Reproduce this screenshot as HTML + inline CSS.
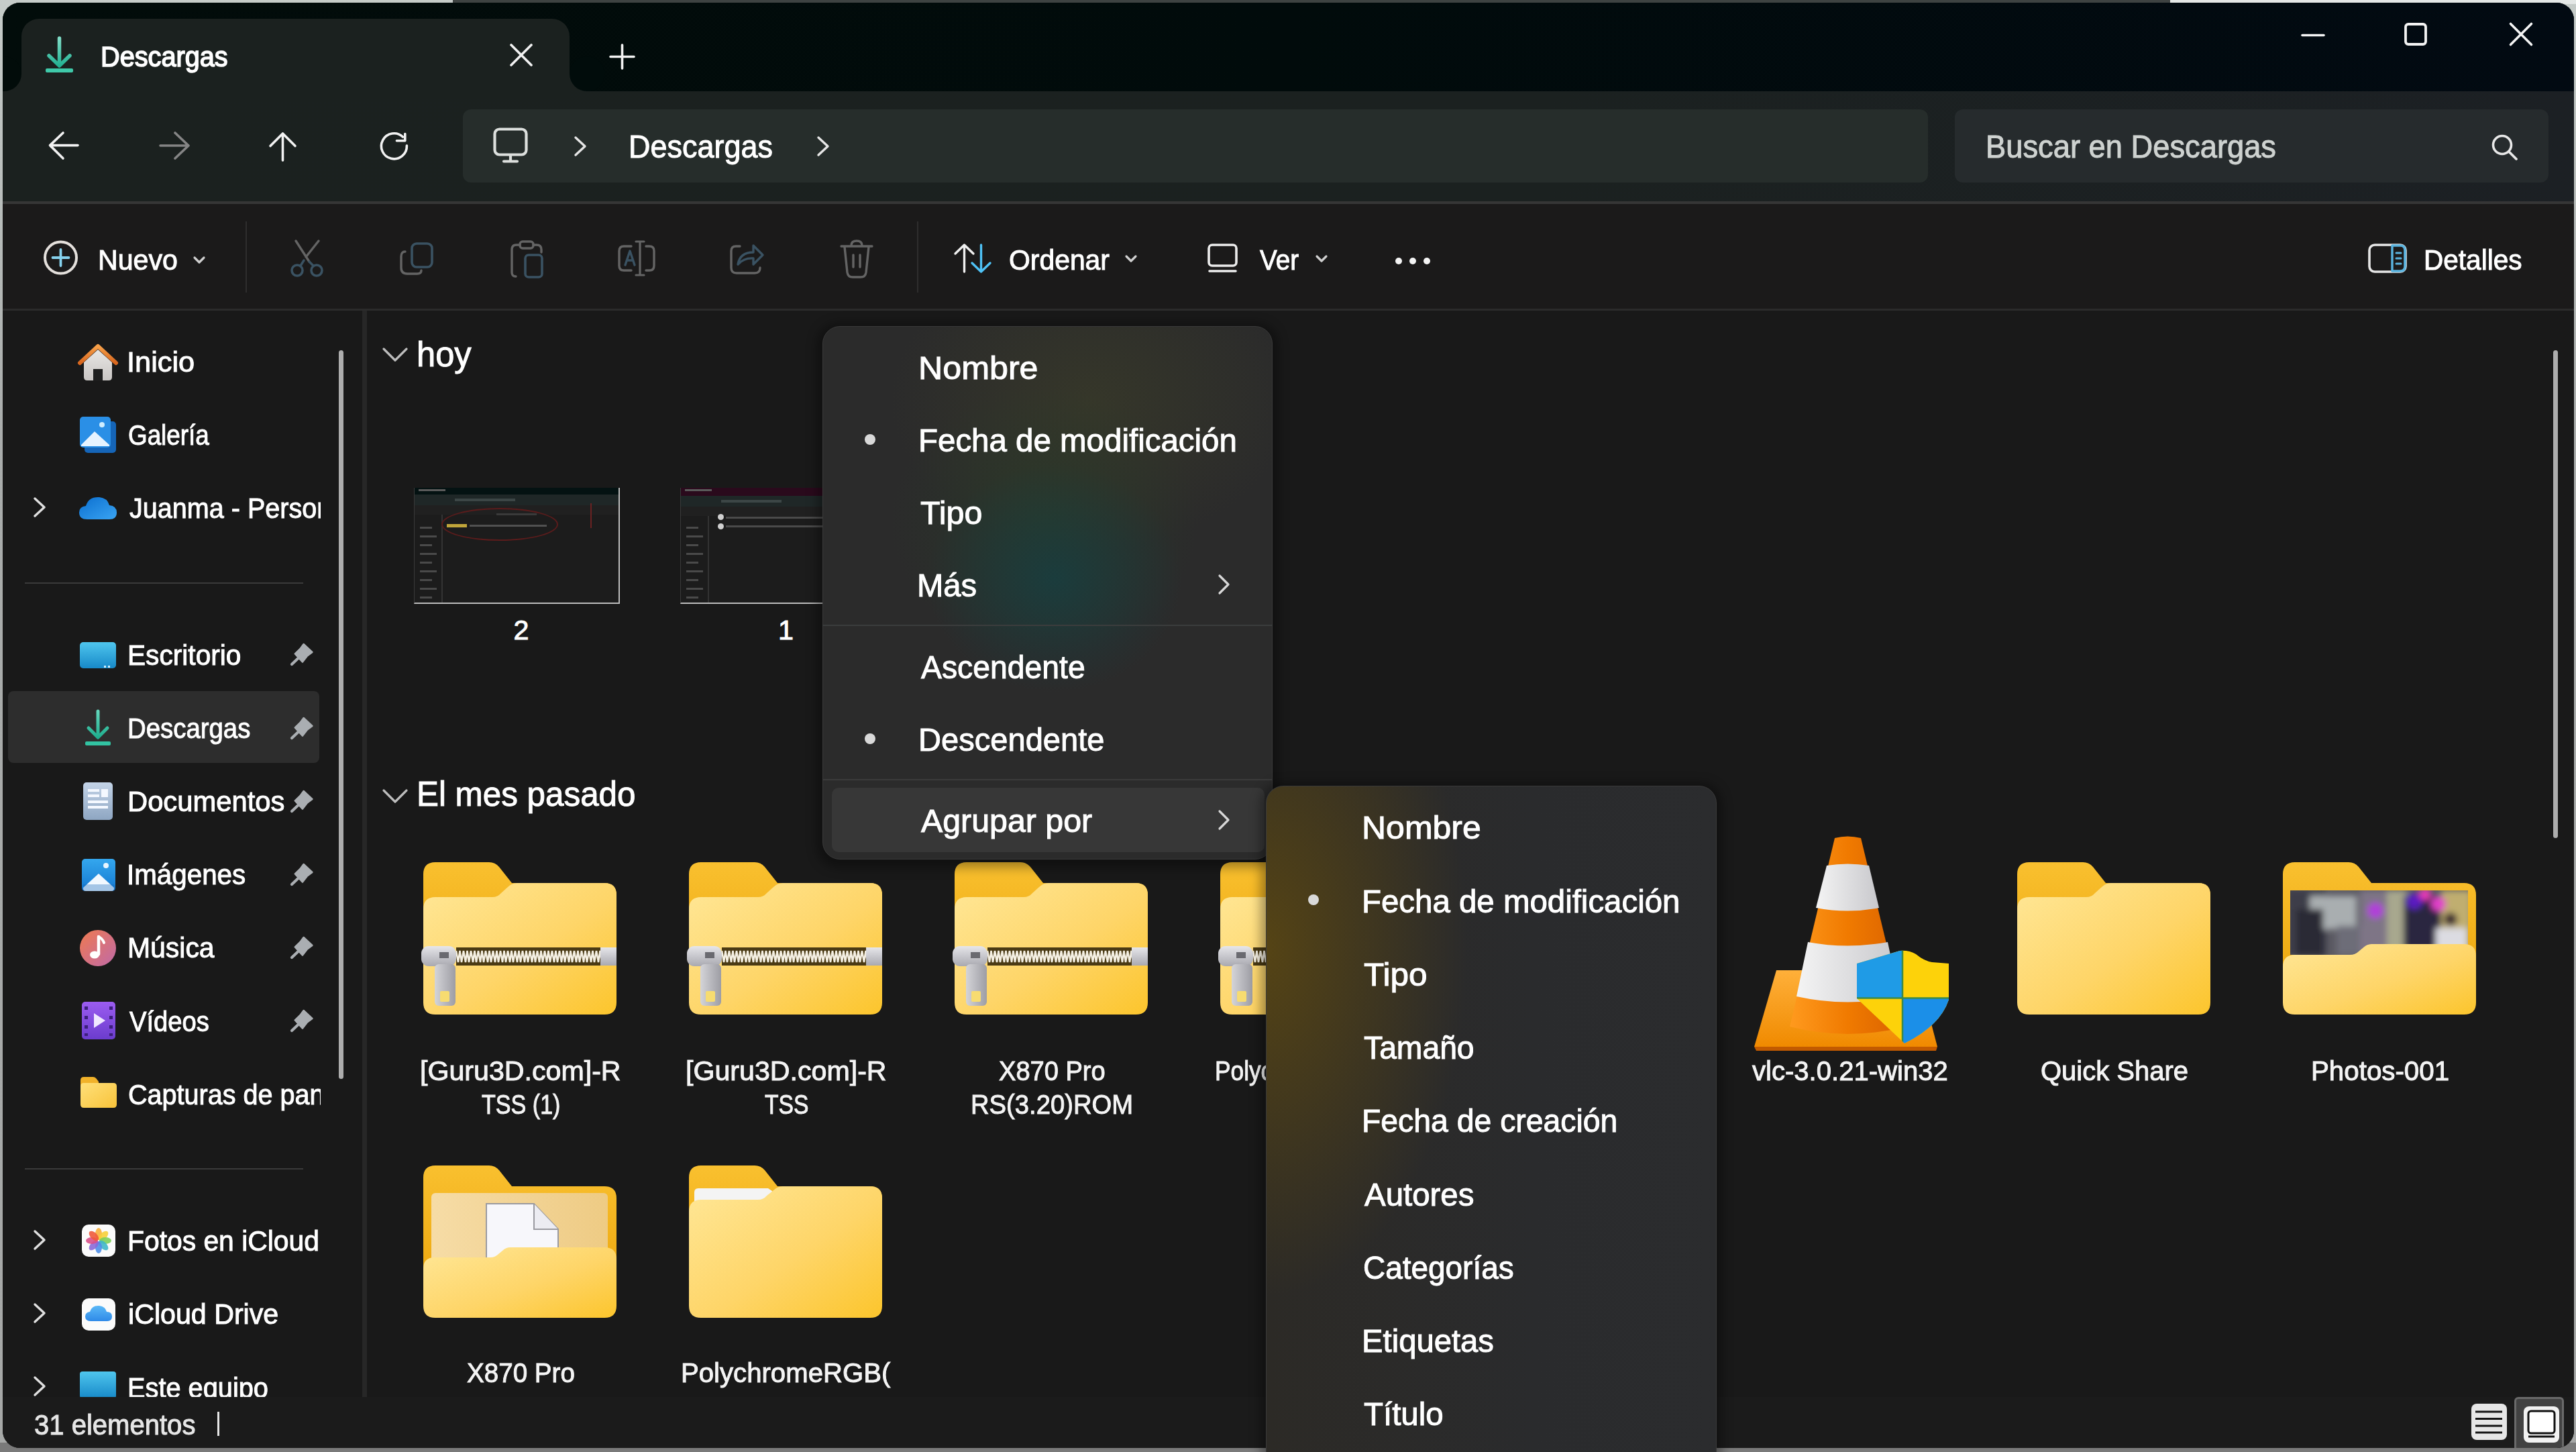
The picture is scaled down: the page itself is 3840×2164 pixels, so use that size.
<!DOCTYPE html>
<html><head><meta charset="utf-8">
<style>
*{margin:0;padding:0;box-sizing:border-box}
html,body{width:3840px;height:2164px;overflow:hidden;background:#c9d0cd;font-family:"Liberation Sans",sans-serif;color:#fff}
.a{position:absolute}
#win{position:absolute;left:0;top:0;width:3840px;height:2164px;clip-path:inset(4px 3px 6px 4px round 26px);background:#191919}
.t{position:absolute;white-space:nowrap;line-height:1;-webkit-text-stroke:1px currentColor}
svg.i{position:absolute;overflow:visible}
</style></head><body>
<div class="a" style="left:0;top:0;width:3840px;height:2164px;background:linear-gradient(180deg,#c6ccc9 0,#aaadac 30%,#a6a8a7 100%)"></div>
<div class="a" style="left:675px;top:0;width:2560px;height:6px;background:#3e4342"></div>
<div class="a" style="left:3235px;top:0;width:605px;height:6px;background:#e4e7e6"></div>
<div class="a" style="left:0;top:2150px;width:3840px;height:14px;background:#7a7a7a"></div>
<div id="win">
<div class="a" style="left:0px;top:0px;width:3840px;height:301px;background:linear-gradient(90deg,#1b211f,#1b2120 60%,#1c2024);"></div><div class="a" style="left:0px;top:0px;width:3840px;height:136px;background:linear-gradient(90deg,#020c0a,#010b0b 50%,#020a12);"></div><div class="a" style="left:6px;top:110px;width:26px;height:26px;background:#1b211f;"></div><div class="a" style="left:849px;top:110px;width:26px;height:26px;background:#1b211f;"></div><div class="a" style="left:-20px;top:84px;width:52px;height:52px;background:#020c0a;border-radius:50%"></div><div class="a" style="left:849px;top:84px;width:52px;height:52px;background:#010c0b;border-radius:50%"></div><div class="a" style="left:32px;top:28px;width:817px;height:120px;background:#1b211f;border-radius:26px 26px 0 0"></div><svg class="i" style="left:60px;top:50px;" width="56" height="64" viewBox="0 0 56 64"><defs><linearGradient id="dlg" x1="0" y1="0" x2="0" y2="1"><stop offset="0" stop-color="#7fdcc6"/><stop offset="1" stop-color="#23b192"/></linearGradient></defs>
<path d="M28.5,7 V47 M13,33 L28.5,48 L44,33" fill="none" stroke="url(#dlg)" stroke-width="5.5" stroke-linecap="round" stroke-linejoin="round"/>
<rect x="8" y="52" width="41" height="6" rx="2" fill="#3fc9a9"/></svg><div class="t" style="left:149.5px;top:62.5px;font-size:43px;color:#fff;font-weight:normal;transform:scaleX(0.9228);transform-origin:0 0;-webkit-text-stroke:1.6px #fff">Descargas</div><svg class="i" style="left:760px;top:65px;" width="34" height="34" viewBox="0 0 34 34"><path d="M2,2 L32,32 M32,2 L2,32" stroke="#f2f2f2" stroke-width="3.6" stroke-linecap="round"/></svg><svg class="i" style="left:909px;top:66px;" width="37" height="37" viewBox="0 0 37 37"><path d="M18.5,1 V36 M1,18.5 H36" stroke="#f2f2f2" stroke-width="3.6" stroke-linecap="round"/></svg><svg class="i" style="left:3431px;top:50px;" width="34" height="6" viewBox="0 0 34 6"><path d="M1,2.5 H33" stroke="#f4f4f4" stroke-width="3.6" stroke-linecap="round"/></svg><svg class="i" style="left:3584px;top:34px;" width="34" height="34" viewBox="0 0 34 34"><rect x="2" y="2" width="30" height="30" rx="4" fill="none" stroke="#f4f4f4" stroke-width="3.8"/></svg><svg class="i" style="left:3741px;top:34px;" width="34" height="34" viewBox="0 0 34 34"><path d="M1.5,1.5 L32.5,32.5 M32.5,1.5 L1.5,32.5" stroke="#f4f4f4" stroke-width="3.6" stroke-linecap="round"/></svg><svg class="i" style="left:60px;top:180px;" width="80" height="80" viewBox="0 0 80 80"><path d="M14.5,36.6 H56 M34,18 L14.5,36.6 L34,56" stroke="#f2f2f2" stroke-width="3.6" fill="none" stroke-linecap="round" stroke-linejoin="round"/></svg><svg class="i" style="left:220px;top:180px;" width="80" height="80" viewBox="0 0 80 80"><path d="M19,37 H61 M41,18 L61,37 L41,56" stroke="#858585" stroke-width="3.6" fill="none" stroke-linecap="round" stroke-linejoin="round"/></svg><svg class="i" style="left:380px;top:180px;" width="80" height="80" viewBox="0 0 80 80"><path d="M41.5,19 V59 M23,37.5 L41.5,19 L60,37.5" stroke="#f2f2f2" stroke-width="3.6" fill="none" stroke-linecap="round" stroke-linejoin="round"/></svg><svg class="i" style="left:540px;top:180px;" width="80" height="80" viewBox="0 0 80 80"><path d="M66.4,37 A19,19 0 1 1 60.5,24" stroke="#f2f2f2" stroke-width="3.6" fill="none" stroke-linecap="round" stroke-linejoin="round"/><path d="M63.8,19.5 V29.8 H51.4" stroke="#f2f2f2" stroke-width="3.6" fill="none" stroke-linecap="round" stroke-linejoin="round"/></svg><div class="a" style="left:690px;top:163px;width:2184px;height:109px;background:#262d2b;border-radius:12px"></div><div class="a" style="left:2914px;top:163px;width:885px;height:109px;background:#262b2d;border-radius:12px"></div><svg class="i" style="left:730px;top:185px;" width="64" height="64" viewBox="0 0 64 64"><rect x="7.5" y="7.5" width="47" height="38" rx="7" stroke="#dcdfdd" stroke-width="4.2" fill="none" stroke-linecap="round" stroke-linejoin="round"/><path d="M31,46 V54 M21,55.5 H41" stroke="#dcdfdd" stroke-width="4.2" fill="none" stroke-linecap="round" stroke-linejoin="round"/></svg><svg class="i" style="left:850px;top:200px;" width="30" height="36" viewBox="0 0 30 36"><path d="M8,5 L22,18 L8,31" stroke="#e6e6e6" stroke-width="3.4" fill="none" stroke-linecap="round" stroke-linejoin="round"/></svg><div class="t" style="left:937.4px;top:194.6px;font-size:48px;color:#fff;font-weight:normal;transform:scaleX(0.9369);transform-origin:0 0;">Descargas</div><svg class="i" style="left:1212px;top:200px;" width="30" height="36" viewBox="0 0 30 36"><path d="M8,5 L22,18 L8,31" stroke="#e6e6e6" stroke-width="3.4" fill="none" stroke-linecap="round" stroke-linejoin="round"/></svg><div class="t" style="left:2960.4px;top:195.2px;font-size:48px;color:#ced2d0;font-weight:normal;transform:scaleX(0.9436);transform-origin:0 0;">Buscar en Descargas</div><svg class="i" style="left:3710px;top:196px;" width="50" height="50" viewBox="0 0 50 50"><circle cx="20" cy="20" r="13.5" stroke="#e8e8e8" stroke-width="3.6" fill="none" stroke-linecap="round" stroke-linejoin="round"/><path d="M30,30 L41,41" stroke="#e8e8e8" stroke-width="3.8" fill="none" stroke-linecap="round" stroke-linejoin="round"/></svg><div class="a" style="left:0px;top:300px;width:3840px;height:4px;background:#363636;"></div><div class="a" style="left:0px;top:304px;width:3840px;height:156px;background:#1b1a1a;"></div><div class="a" style="left:0px;top:460px;width:3840px;height:3px;background:#2b2b2b;"></div><svg class="i" style="left:60px;top:354px;" width="62" height="62" viewBox="0 0 62 62"><circle cx="30.5" cy="30" r="23.5" stroke="#e4e0dc" stroke-width="4" fill="none" stroke-linecap="round" stroke-linejoin="round"/><path d="M30.5,18 V42 M18.5,30 H42.5" stroke="#86d2ee" stroke-width="3.8" fill="none" stroke-linecap="round" stroke-linejoin="round"/></svg><div class="t" style="left:146.2px;top:367.4px;font-size:42.5px;color:#fff;font-weight:normal;transform:scaleX(0.9676);transform-origin:0 0;">Nuevo</div><svg class="i" style="left:287px;top:381px;" width="20" height="14" viewBox="0 0 20 14"><path d="M3,3 L10,10 L17,3" stroke="#d0d0d0" stroke-width="3.2" fill="none" stroke-linecap="round" stroke-linejoin="round"/></svg><div class="a" style="left:366px;top:330px;width:2px;height:106px;background:#2e2e2e;"></div><svg class="i" style="left:425px;top:350px;" width="70" height="70" viewBox="0 0 70 70"><path d="M16,9 L36,40 M50,9 L31,33" stroke="#646464" stroke-width="3.4" fill="none" stroke-linecap="round" stroke-linejoin="round"/><circle cx="18" cy="53" r="8" stroke="#3a5262" stroke-width="3.6" fill="none" stroke-linecap="round" stroke-linejoin="round"/><circle cx="47" cy="53" r="8" stroke="#3a5262" stroke-width="3.6" fill="none" stroke-linecap="round" stroke-linejoin="round"/><path d="M36,40 L42,46 M28,38 L23,46" stroke="#3a5262" stroke-width="3.4" fill="none" stroke-linecap="round" stroke-linejoin="round"/></svg><svg class="i" style="left:590px;top:355px;" width="65" height="60" viewBox="0 0 65 60"><path d="M14,20 Q8,20 8,27 V44 Q8,53 17,53 H32 Q38,53 38,48" stroke="#646464" stroke-width="3.4" fill="none" stroke-linecap="round" stroke-linejoin="round"/><rect x="24" y="8" width="30" height="35" rx="7" stroke="#3a5262" stroke-width="3.6" fill="none" stroke-linecap="round" stroke-linejoin="round"/></svg><svg class="i" style="left:755px;top:350px;" width="65" height="70" viewBox="0 0 65 70"><path d="M14,62 Q8,62 8,56 V22 Q8,15 15,15 H20 M40,15 H45 Q52,15 52,22 V26" stroke="#646464" stroke-width="3.4" fill="none" stroke-linecap="round" stroke-linejoin="round"/><rect x="20" y="10" width="20" height="10" rx="4" stroke="#646464" stroke-width="3.4" fill="none" stroke-linecap="round" stroke-linejoin="round"/><rect x="28" y="30" width="25" height="33" rx="5" stroke="#3a5262" stroke-width="3.6" fill="none" stroke-linecap="round" stroke-linejoin="round"/></svg><svg class="i" style="left:915px;top:350px;" width="70" height="70" viewBox="0 0 70 70"><path d="M26,17 H15 Q8,17 8,24 V46 Q8,53 15,53 H26 M48,17 H53 Q60,17 60,24 V46 Q60,53 53,53 H48" stroke="#646464" stroke-width="3.4" fill="none" stroke-linecap="round" stroke-linejoin="round"/><path d="M39,10 V60 M33,10 H45 M33,60 H45" stroke="#646464" stroke-width="3.2" fill="none" stroke-linecap="round" stroke-linejoin="round"/><path d="M17,45 L24,24 L31,45 M20,38 H28" stroke="#3a5262" stroke-width="3.4" fill="none" stroke-linecap="round" stroke-linejoin="round"/></svg><svg class="i" style="left:1083px;top:352px;" width="60" height="62" viewBox="0 0 60 62"><path d="M20,15 H14 Q7,15 7,22 V47 Q7,55 15,55 H42 Q50,55 50,47" stroke="#646464" stroke-width="3.4" fill="none" stroke-linecap="round" stroke-linejoin="round"/><path d="M17,42 Q20,24 40,24 V14 L54,28 L40,42 V33 Q26,32 17,42 Z" stroke="#3a5262" stroke-width="3.4" fill="none" stroke-linecap="round" stroke-linejoin="round"/></svg><svg class="i" style="left:1247px;top:350px;" width="60" height="70" viewBox="0 0 60 70"><path d="M7,17 H53 M22,16 Q22,9 30,9 Q38,9 38,16 M12,18 L16,56 Q17,63 24,63 H36 Q43,63 44,56 L48,18 M25,30 V48 M35,30 V48" stroke="#646464" stroke-width="3.4" fill="none" stroke-linecap="round" stroke-linejoin="round"/></svg><div class="a" style="left:1367px;top:330px;width:2px;height:106px;background:#2e2e2e;"></div><svg class="i" style="left:1418px;top:358px;" width="66" height="54" viewBox="0 0 66 54"><path d="M19.5,7 V47 M6,20 L19.5,7 L33,20" stroke="#f0f0f0" stroke-width="3.4" fill="none" stroke-linecap="round" stroke-linejoin="round"/><path d="M44.5,7 V47 M31,34 L44.5,47 L58,34" stroke="#4fc3f7" stroke-width="3.4" fill="none" stroke-linecap="round" stroke-linejoin="round"/></svg><div class="t" style="left:1504.4px;top:367.4px;font-size:42.5px;color:#fff;font-weight:normal;transform:scaleX(0.9619);transform-origin:0 0;">Ordenar</div><svg class="i" style="left:1676px;top:379px;" width="20" height="14" viewBox="0 0 20 14"><path d="M3,3 L10,10 L17,3" stroke="#d0d0d0" stroke-width="3.2" fill="none" stroke-linecap="round" stroke-linejoin="round"/></svg><svg class="i" style="left:1795px;top:358px;" width="56" height="52" viewBox="0 0 56 52"><rect x="7" y="7" width="41" height="31" rx="5" stroke="#ececec" stroke-width="3.6" fill="none" stroke-linecap="round" stroke-linejoin="round"/><path d="M8,46 H47" stroke="#ececec" stroke-width="3.6" fill="none" stroke-linecap="round" stroke-linejoin="round"/></svg><div class="t" style="left:1878.0px;top:367.4px;font-size:42.5px;color:#fff;font-weight:normal;transform:scaleX(0.9093);transform-origin:0 0;">Ver</div><svg class="i" style="left:1960px;top:379px;" width="20" height="14" viewBox="0 0 20 14"><path d="M3,3 L10,10 L17,3" stroke="#d0d0d0" stroke-width="3.2" fill="none" stroke-linecap="round" stroke-linejoin="round"/></svg><div class="a" style="left:2080px;top:384px;width:10px;height:10px;background:#f4f4f4;border-radius:50%"></div><div class="a" style="left:2101px;top:384px;width:10px;height:10px;background:#f4f4f4;border-radius:50%"></div><div class="a" style="left:2122px;top:384px;width:10px;height:10px;background:#f4f4f4;border-radius:50%"></div><svg class="i" style="left:3526px;top:358px;" width="66" height="54" viewBox="0 0 66 54"><rect x="6" y="7" width="54" height="40" rx="8" stroke="#e6e6e6" stroke-width="3.6" fill="none" stroke-linecap="round" stroke-linejoin="round"/><path d="M40,8 V46" stroke="#5ab4e0" stroke-width="3.4"/><path d="M46,19 H53 M46,27 H53 M46,35 H53" stroke="#5ab4e0" stroke-width="3" fill="none" stroke-linecap="round" stroke-linejoin="round"/><path d="M40,8 H52 Q59,8 59,15 V39 Q59,46 52,46 H40" stroke="#5ab4e0" stroke-width="3.6" fill="none" stroke-linecap="round" stroke-linejoin="round"/></svg><div class="t" style="left:3612.8px;top:367.4px;font-size:42.5px;color:#fff;font-weight:normal;transform:scaleX(0.9539);transform-origin:0 0;">Detalles</div><div class="a" style="left:0px;top:463px;width:542px;height:1619px;background:#191919;"></div><div class="a" style="left:540px;top:463px;width:7px;height:1619px;background:#272727;"></div><div class="a" style="left:0px;top:463px;width:3840px;height:1619px;background:transparent;"></div><div class="a" style="left:12px;top:1030px;width:464px;height:107px;background:#2d2d2d;border-radius:8px"></div><div class="a" style="left:37px;top:868px;width:415px;height:2px;background:#3a3a3a;"></div><div class="a" style="left:37px;top:1741px;width:415px;height:2px;background:#3a3a3a;"></div><div class="a" style="left:505px;top:522px;width:7px;height:1086px;background:#adadad;border-radius:3.5px"></div><div class="a" style="left:0;top:0;width:478px;height:2082px;overflow:hidden"><div class="t" style="left:189.1px;top:517.7px;font-size:43px;color:#fff;font-weight:normal;transform:scaleX(1.0078);transform-origin:0 0;">Inicio</div><div class="t" style="left:191.2px;top:626.9px;font-size:43px;color:#fff;font-weight:normal;transform:scaleX(0.8560);transform-origin:0 0;">Galería</div><div class="t" style="left:192.6px;top:736.1px;font-size:43px;color:#fff;font-weight:normal;transform:scaleX(0.9200);transform-origin:0 0;">Juanma - Personal</div><div class="t" style="left:189.7px;top:954.5px;font-size:43px;color:#fff;font-weight:normal;transform:scaleX(0.9454);transform-origin:0 0;">Escritorio</div><div class="t" style="left:189.9px;top:1063.7px;font-size:43px;color:#fff;font-weight:normal;transform:scaleX(0.8919);transform-origin:0 0;">Descargas</div><div class="t" style="left:189.7px;top:1172.9px;font-size:43px;color:#fff;font-weight:normal;transform:scaleX(0.9710);transform-origin:0 0;">Documentos</div><div class="t" style="left:189.4px;top:1282.1px;font-size:43px;color:#fff;font-weight:normal;transform:scaleX(0.9386);transform-origin:0 0;">Imágenes</div><div class="t" style="left:189.7px;top:1391.3px;font-size:43px;color:#fff;font-weight:normal;transform:scaleX(0.9516);transform-origin:0 0;">Música</div><div class="t" style="left:193.0px;top:1500.5px;font-size:43px;color:#fff;font-weight:normal;transform:scaleX(0.8878);transform-origin:0 0;">Vídeos</div><div class="t" style="left:191.0px;top:1609.7px;font-size:43px;color:#fff;font-weight:normal;transform:scaleX(0.9200);transform-origin:0 0;">Capturas de pantalla</div><div class="t" style="left:189.7px;top:1828.1px;font-size:43px;color:#fff;font-weight:normal;transform:scaleX(0.9492);transform-origin:0 0;">Fotos en iCloud</div><div class="t" style="left:190.5px;top:1937.3px;font-size:43px;color:#fff;font-weight:normal;transform:scaleX(0.9576);transform-origin:0 0;">iCloud Drive</div><div class="t" style="left:189.8px;top:2046.5px;font-size:43px;color:#fff;font-weight:normal;transform:scaleX(0.9243);transform-origin:0 0;">Este equipo</div></div><svg class="i" style="left:46px;top:740px;" width="28" height="32" viewBox="0 0 28 32"><path d="M6,3 L20,16 L6,29" stroke="#e0e0e0" stroke-width="3.4" fill="none" stroke-linecap="round" stroke-linejoin="round"/></svg><svg class="i" style="left:428px;top:952px;" width="44" height="44" viewBox="0 0 44 44"><path d="M24.6,8 L37.4,20 L30,25.5 L23,34.6 L11.8,22.4 L19.5,15 Z" fill="#aaaeb2" stroke="#aaaeb2" stroke-width="2.5" stroke-linejoin="round"/><path d="M16.5,29 L7,38" stroke="#aaaeb2" stroke-width="4.2" stroke-linecap="round"/></svg><svg class="i" style="left:428px;top:1062px;" width="44" height="44" viewBox="0 0 44 44"><path d="M24.6,8 L37.4,20 L30,25.5 L23,34.6 L11.8,22.4 L19.5,15 Z" fill="#aaaeb2" stroke="#aaaeb2" stroke-width="2.5" stroke-linejoin="round"/><path d="M16.5,29 L7,38" stroke="#aaaeb2" stroke-width="4.2" stroke-linecap="round"/></svg><svg class="i" style="left:428px;top:1171px;" width="44" height="44" viewBox="0 0 44 44"><path d="M24.6,8 L37.4,20 L30,25.5 L23,34.6 L11.8,22.4 L19.5,15 Z" fill="#aaaeb2" stroke="#aaaeb2" stroke-width="2.5" stroke-linejoin="round"/><path d="M16.5,29 L7,38" stroke="#aaaeb2" stroke-width="4.2" stroke-linecap="round"/></svg><svg class="i" style="left:428px;top:1280px;" width="44" height="44" viewBox="0 0 44 44"><path d="M24.6,8 L37.4,20 L30,25.5 L23,34.6 L11.8,22.4 L19.5,15 Z" fill="#aaaeb2" stroke="#aaaeb2" stroke-width="2.5" stroke-linejoin="round"/><path d="M16.5,29 L7,38" stroke="#aaaeb2" stroke-width="4.2" stroke-linecap="round"/></svg><svg class="i" style="left:428px;top:1389px;" width="44" height="44" viewBox="0 0 44 44"><path d="M24.6,8 L37.4,20 L30,25.5 L23,34.6 L11.8,22.4 L19.5,15 Z" fill="#aaaeb2" stroke="#aaaeb2" stroke-width="2.5" stroke-linejoin="round"/><path d="M16.5,29 L7,38" stroke="#aaaeb2" stroke-width="4.2" stroke-linecap="round"/></svg><svg class="i" style="left:428px;top:1498px;" width="44" height="44" viewBox="0 0 44 44"><path d="M24.6,8 L37.4,20 L30,25.5 L23,34.6 L11.8,22.4 L19.5,15 Z" fill="#aaaeb2" stroke="#aaaeb2" stroke-width="2.5" stroke-linejoin="round"/><path d="M16.5,29 L7,38" stroke="#aaaeb2" stroke-width="4.2" stroke-linecap="round"/></svg><svg class="i" style="left:46px;top:1832px;" width="28" height="32" viewBox="0 0 28 32"><path d="M6,3 L20,16 L6,29" stroke="#e0e0e0" stroke-width="3.4" fill="none" stroke-linecap="round" stroke-linejoin="round"/></svg><svg class="i" style="left:46px;top:1941px;" width="28" height="32" viewBox="0 0 28 32"><path d="M6,3 L20,16 L6,29" stroke="#e0e0e0" stroke-width="3.4" fill="none" stroke-linecap="round" stroke-linejoin="round"/></svg><svg class="i" style="left:46px;top:2050px;" width="28" height="32" viewBox="0 0 28 32"><path d="M6,3 L20,16 L6,29" stroke="#e0e0e0" stroke-width="3.4" fill="none" stroke-linecap="round" stroke-linejoin="round"/></svg><svg class="i" style="left:116px;top:512px;" width="60" height="58" viewBox="0 0 60 58"><defs><linearGradient id="hr" x1="0" y1="0" x2="0" y2="1"><stop offset="0" stop-color="#f7a14a"/><stop offset="1" stop-color="#d8661e"/></linearGradient>
<linearGradient id="hb" x1="0" y1="0" x2="0" y2="1"><stop offset="0" stop-color="#e8e6e4"/><stop offset="1" stop-color="#c9c6c4"/></linearGradient></defs>
<path d="M9,28 L30,9 L51,28 V50 Q51,55 46,55 H37 V38 H23 V55 H14 Q9,55 9,50 Z" fill="url(#hb)"/>
<path d="M3,29 L30,4 L57,29" fill="none" stroke="url(#hr)" stroke-width="6" stroke-linecap="round" stroke-linejoin="round"/>
<rect x="24" y="38" width="12" height="17" fill="#1f1f1f"/></svg><svg class="i" style="left:117px;top:619px;" width="58" height="58" viewBox="0 0 58 58"><rect x="9" y="9" width="47" height="47" rx="5" fill="#1565b8"/>
<rect x="2" y="2" width="46" height="46" rx="5" fill="#2a8fe6"/>
<circle cx="35" cy="14" r="4" fill="#cfeeff"/>
<path d="M4,44 L24,24 L46,44 V46 H4 Z" fill="#e6f3ff"/></svg><svg class="i" style="left:116px;top:736px;" width="60" height="42" viewBox="0 0 60 42"><defs><linearGradient id="od" x1="0" y1="0" x2="1" y2="1"><stop offset="0" stop-color="#0b6fd0"/><stop offset="1" stop-color="#3aa4f2"/></linearGradient></defs>
<path d="M14,38 Q2,38 2,28 Q2,19 12,18 Q16,4 32,5 Q44,6 47,17 Q58,18 58,28 Q58,38 47,38 Z" fill="url(#od)"/></svg><svg class="i" style="left:117px;top:955px;" width="58" height="44" viewBox="0 0 58 44"><defs><linearGradient id="es" x1="0" y1="0" x2="0" y2="1"><stop offset="0" stop-color="#4fc6ee"/><stop offset="1" stop-color="#1789c8"/></linearGradient></defs>
<rect x="2" y="2" width="54" height="39" rx="5" fill="url(#es)"/><rect x="38" y="37" width="3" height="3" fill="#cfefff"/><rect x="44" y="37" width="3" height="3" fill="#cfefff"/></svg><svg class="i" style="left:122px;top:1054px;" width="50" height="62" viewBox="0 0 50 62"><defs><linearGradient id="dl2" x1="0" y1="0" x2="0" y2="1"><stop offset="0" stop-color="#62d6bb"/><stop offset="1" stop-color="#1fae8e"/></linearGradient></defs>
<path d="M24,6 V44 M10,31 L24,45 L38,31" fill="none" stroke="url(#dl2)" stroke-width="5" stroke-linecap="round" stroke-linejoin="round"/>
<rect x="5" y="51" width="38" height="6" rx="2" fill="#32c3a2"/></svg><svg class="i" style="left:122px;top:1164px;" width="48" height="60" viewBox="0 0 48 60"><defs><linearGradient id="dc" x1="0" y1="0" x2="0" y2="1"><stop offset="0" stop-color="#c4d4e8"/><stop offset="1" stop-color="#8ea6c2"/></linearGradient></defs>
<rect x="2" y="2" width="44" height="56" rx="5" fill="url(#dc)"/>
<rect x="9" y="12" width="17" height="4" fill="#f4f8ff"/><rect x="9" y="20" width="17" height="4" fill="#f4f8ff"/><rect x="29" y="12" width="10" height="12" fill="#f4f8ff"/>
<rect x="9" y="29" width="30" height="4" fill="#f4f8ff"/><rect x="9" y="37" width="30" height="4" fill="#f4f8ff"/></svg><svg class="i" style="left:120px;top:1278px;" width="54" height="52" viewBox="0 0 54 52"><defs><linearGradient id="im" x1="0" y1="0" x2="0" y2="1"><stop offset="0" stop-color="#34a7ee"/><stop offset="1" stop-color="#1478d0"/></linearGradient></defs>
<rect x="2" y="2" width="50" height="48" rx="5" fill="url(#im)"/><circle cx="38" cy="12" r="4" fill="#e8f6ff"/>
<path d="M4,45 L27,24 L50,45 V46 Q50,50 46,50 H8 Q4,50 4,46 Z" fill="#f1f8ff"/><rect x="2" y="40" width="50" height="10" rx="4" fill="#1466b8" opacity="0.35"/></svg><svg class="i" style="left:117px;top:1384px;" width="58" height="58" viewBox="0 0 58 58"><defs><linearGradient id="mu" x1="0" y1="0" x2="1" y2="1"><stop offset="0" stop-color="#ef7a50"/><stop offset="1" stop-color="#c06aa8"/></linearGradient></defs>
<circle cx="29" cy="29" r="27" fill="url(#mu)"/><path d="M30,12 V38" stroke="#fff" stroke-width="4.5" stroke-linecap="round"/><ellipse cx="24" cy="39" rx="7" ry="5.5" fill="#fff"/><path d="M30,12 Q36,15 38,21" stroke="#fff" stroke-width="4" fill="none" stroke-linecap="round"/></svg><svg class="i" style="left:120px;top:1491px;" width="54" height="60" viewBox="0 0 54 60"><defs><linearGradient id="vi" x1="0" y1="0" x2="0" y2="1"><stop offset="0" stop-color="#9b5cf0"/><stop offset="1" stop-color="#6b3ccd"/></linearGradient></defs>
<rect x="2" y="2" width="50" height="56" rx="5" fill="url(#vi)"/>
<g fill="#3b1f7a"><rect x="6" y="9" width="5" height="5"/><rect x="6" y="23" width="5" height="5"/><rect x="6" y="37" width="5" height="5"/><rect x="6" y="49" width="5" height="4"/><rect x="43" y="9" width="5" height="5"/><rect x="43" y="23" width="5" height="5"/><rect x="43" y="37" width="5" height="5"/><rect x="43" y="49" width="5" height="4"/></g>
<path d="M20,19 L37,30 L20,41 Z" fill="#f0e8ff"/></svg><svg class="i" style="left:118px;top:1603px;" width="58" height="50" viewBox="0 0 58 50"><defs><linearGradient id="cf" x1="0" y1="0" x2="1" y2="1"><stop offset="0" stop-color="#ffe07a"/><stop offset="1" stop-color="#f8c33a"/></linearGradient></defs>
<path d="M2,7 Q2,2 7,2 H21 Q24,2 26,5 L29,9 V30 H2 Z" fill="#f1b22a"/><path d="M2,16 Q2,11 7,11 H51 Q56,11 56,16 V43 Q56,48 51,48 H7 Q2,48 2,43 Z" fill="url(#cf)"/></svg><svg class="i" style="left:120px;top:1823px;" width="54" height="52" viewBox="0 0 54 52"><rect x="2" y="2" width="50" height="48" rx="10" fill="#fbfbfb"/>
<g transform="translate(27,26)">
<ellipse cx="0" cy="-10" rx="5" ry="9" fill="#f8b03c" opacity="0.9"/>
<ellipse cx="0" cy="-10" rx="5" ry="9" fill="#f6cf3a" transform="rotate(45)" opacity="0.9"/>
<ellipse cx="0" cy="-10" rx="5" ry="9" fill="#7ccf5a" transform="rotate(90)" opacity="0.9"/>
<ellipse cx="0" cy="-10" rx="5" ry="9" fill="#3fb7c9" transform="rotate(135)" opacity="0.9"/>
<ellipse cx="0" cy="-10" rx="5" ry="9" fill="#4f8ee8" transform="rotate(180)" opacity="0.9"/>
<ellipse cx="0" cy="-10" rx="5" ry="9" fill="#8a6ad8" transform="rotate(225)" opacity="0.9"/>
<ellipse cx="0" cy="-10" rx="5" ry="9" fill="#d9508a" transform="rotate(270)" opacity="0.9"/>
<ellipse cx="0" cy="-10" rx="5" ry="9" fill="#ef5a3a" transform="rotate(315)" opacity="0.9"/>
</g></svg><svg class="i" style="left:120px;top:1933px;" width="54" height="52" viewBox="0 0 54 52"><defs><linearGradient id="ic" x1="0" y1="0" x2="0" y2="1"><stop offset="0" stop-color="#5ab8f7"/><stop offset="1" stop-color="#2f8ae8"/></linearGradient></defs>
<rect x="2" y="2" width="50" height="48" rx="10" fill="#fbfbfb"/>
<path d="M15,36 Q7,36 7,29 Q7,23 14,22 Q17,12 28,13 Q37,14 39,22 Q47,22 47,29 Q47,36 40,36 Z" fill="url(#ic)"/></svg><svg class="i" style="left:117px;top:2042px;" width="58" height="44" viewBox="0 0 58 44"><defs><linearGradient id="eq" x1="0" y1="0" x2="0" y2="1"><stop offset="0" stop-color="#4fc6ee"/><stop offset="1" stop-color="#1789c8"/></linearGradient></defs>
<rect x="2" y="2" width="54" height="40" rx="4" fill="url(#eq)"/></svg><div class="a" style="left:0px;top:2082px;width:3840px;height:82px;background:#1b1b1b;"></div><div class="a" style="left:3806px;top:522px;width:7px;height:727px;background:#adadad;border-radius:3.5px"></div><svg class="i" style="left:566px;top:512px;" width="46" height="32" viewBox="0 0 46 32"><path d="M6,8 L23,25 L40,8" stroke="#bdbdbd" stroke-width="3.2" fill="none" stroke-linecap="round" stroke-linejoin="round"/></svg><div class="t" style="left:621.4px;top:502.6px;font-size:51px;color:#fff;font-weight:normal;transform:scaleX(0.9928);transform-origin:0 0;">hoy</div><svg class="i" style="left:566px;top:1170px;" width="46" height="32" viewBox="0 0 46 32"><path d="M6,8 L23,25 L40,8" stroke="#bdbdbd" stroke-width="3.2" fill="none" stroke-linecap="round" stroke-linejoin="round"/></svg><div class="t" style="left:621.3px;top:1156.8px;font-size:52px;color:#fff;font-weight:normal;transform:scaleX(0.9493);transform-origin:0 0;">El mes pasado</div><div class="a" style="left:617px;top:727px;width:307px;height:173px;background:#1c1c1c;border-right:2.5px solid #bdbdbd;border-bottom:2.5px solid #bdbdbd;border-left:1px solid #3a3a3a;overflow:hidden"><div class="a" style="left:0;top:0;width:307px;height:10px;background:#041212"></div><div class="a" style="left:0;top:10px;width:307px;height:16px;background:#1f2727"></div><div class="a" style="left:0;top:26px;width:307px;height:14px;background:#202020"></div><div class="a" style="left:6px;top:2px;width:40px;height:3px;background:#5a5a5a"></div><div class="a" style="left:60px;top:16px;width:90px;height:4px;background:#3c4646"></div><div class="a" style="left:8px;top:58px;width:18px;height:3px;background:#4a4a4a"></div><div class="a" style="left:8px;top:71px;width:25px;height:3px;background:#4a4a4a"></div><div class="a" style="left:8px;top:84px;width:18px;height:3px;background:#4a4a4a"></div><div class="a" style="left:8px;top:97px;width:25px;height:3px;background:#4a4a4a"></div><div class="a" style="left:8px;top:110px;width:18px;height:3px;background:#4a4a4a"></div><div class="a" style="left:8px;top:123px;width:25px;height:3px;background:#4a4a4a"></div><div class="a" style="left:8px;top:136px;width:18px;height:3px;background:#4a4a4a"></div><div class="a" style="left:8px;top:149px;width:25px;height:3px;background:#4a4a4a"></div><div class="a" style="left:8px;top:162px;width:18px;height:3px;background:#4a4a4a"></div><div class="a" style="left:40px;top:40px;width:1.5px;height:133px;background:#333"></div></div><div class="a" style="left:658px;top:757px;width:174px;height:49px;border:2.5px solid #5a1c1c;border-radius:50%"></div><div class="a" style="left:666px;top:781px;width:30px;height:5px;background:#c0a53a;"></div><div class="a" style="left:700px;top:782px;width:115px;height:3px;background:#505050;"></div><div class="a" style="left:880px;top:750px;width:2px;height:37px;background:#6a2222;"></div><div class="a" style="left:740px;top:765px;width:60px;height:3px;background:#3a3a3a;"></div><div class="a" style="left:1014px;top:727px;width:307px;height:173px;background:#1c1c1c;border-right:2.5px solid #bdbdbd;border-bottom:2.5px solid #bdbdbd;border-left:1px solid #3a3a3a;overflow:hidden"><div class="a" style="left:0;top:0;width:307px;height:12px;background:#2a0a1c"></div><div class="a" style="left:0;top:12px;width:307px;height:16px;background:#1f2727"></div><div class="a" style="left:0;top:28px;width:307px;height:14px;background:#202020"></div><div class="a" style="left:6px;top:2px;width:40px;height:3px;background:#5a5a5a"></div><div class="a" style="left:60px;top:18px;width:90px;height:4px;background:#3c4646"></div><div class="a" style="left:8px;top:58px;width:18px;height:3px;background:#4a4a4a"></div><div class="a" style="left:8px;top:71px;width:25px;height:3px;background:#4a4a4a"></div><div class="a" style="left:8px;top:84px;width:18px;height:3px;background:#4a4a4a"></div><div class="a" style="left:8px;top:97px;width:25px;height:3px;background:#4a4a4a"></div><div class="a" style="left:8px;top:110px;width:18px;height:3px;background:#4a4a4a"></div><div class="a" style="left:8px;top:123px;width:25px;height:3px;background:#4a4a4a"></div><div class="a" style="left:8px;top:136px;width:18px;height:3px;background:#4a4a4a"></div><div class="a" style="left:8px;top:149px;width:25px;height:3px;background:#4a4a4a"></div><div class="a" style="left:8px;top:162px;width:18px;height:3px;background:#4a4a4a"></div><div class="a" style="left:40px;top:42px;width:1.5px;height:131px;background:#333"></div></div><div class="a" style="left:1082px;top:770px;width:160px;height:3px;background:#4a4a4a;"></div><div class="a" style="left:1082px;top:783px;width:160px;height:3px;background:#4a4a4a;"></div><div class="a" style="left:1070px;top:766px;width:9px;height:9px;background:#d0d0d0;border-radius:50%"></div><div class="a" style="left:1070px;top:780px;width:9px;height:9px;background:#d0d0d0;border-radius:50%"></div><div class="t" style="left:765.4px;top:918.9px;font-size:41.3px;color:#fff;font-weight:normal;">2</div><div class="t" style="left:1160.0px;top:918.9px;font-size:41.3px;color:#fff;font-weight:normal;">1</div><svg width="0" height="0" style="position:absolute"><defs>
<linearGradient id="fT" x1="0" y1="0" x2="0" y2="1"><stop offset="0" stop-color="#f9c02f"/><stop offset="1" stop-color="#eda80f"/></linearGradient>
<linearGradient id="fF" x1="0" y1="0" x2="1" y2="1"><stop offset="0" stop-color="#ffe797"/><stop offset="0.55" stop-color="#fed568"/><stop offset="1" stop-color="#fcc52c"/></linearGradient>
<linearGradient id="fB" x1="0" y1="0" x2="1" y2="0"><stop offset="0" stop-color="#f6dca6"/><stop offset="1" stop-color="#eecb84"/></linearGradient>
<linearGradient id="zS" x1="0" y1="0" x2="0" y2="1"><stop offset="0" stop-color="#e6e6ea"/><stop offset="1" stop-color="#a9a9b0"/></linearGradient>
<linearGradient id="zP" x1="0" y1="0" x2="1" y2="0"><stop offset="0" stop-color="#d4d4d8"/><stop offset="1" stop-color="#9d9da4"/></linearGradient>
<pattern id="zT" x="49" y="127" width="11" height="27" patternUnits="userSpaceOnUse"><rect width="11" height="27" fill="#4a3a14"/><path d="M0,5 L3,22 L5.5,5 L8,22 L11,5" fill="none" stroke="#f4efe2" stroke-width="2.6" stroke-linejoin="miter"/></pattern>
</defs></svg><svg class="i" style="left:631px;top:1285px;" width="288" height="227" viewBox="0 0 288 227"><path d="M0,18 Q0,0 18,0 H98 Q107,0 113,7 L132,31 H270 Q288,31 288,49 V170 H0 Z" fill="url(#fT)"/><path d="M0,70 Q0,52 18,52 H103 Q111,52 116,46 L126,37 Q132,31 140,31 H270 Q288,31 288,49 V209 Q288,227 270,227 H18 Q0,227 0,209 Z" fill="url(#fF)"/><rect x="49" y="127" width="216" height="27" fill="url(#zT)"/><rect x="264" y="127" width="24" height="27" fill="url(#zS)"/><rect x="-3" y="125" width="52" height="30" rx="11" fill="url(#zS)"/><rect x="24" y="134" width="14" height="9" fill="#6a6a70"/><rect x="17" y="152" width="31" height="62" rx="6" fill="url(#zP)"/><rect x="25" y="192" width="14" height="16" rx="2" fill="#f7dc70"/></svg><svg class="i" style="left:1027px;top:1285px;" width="288" height="227" viewBox="0 0 288 227"><path d="M0,18 Q0,0 18,0 H98 Q107,0 113,7 L132,31 H270 Q288,31 288,49 V170 H0 Z" fill="url(#fT)"/><path d="M0,70 Q0,52 18,52 H103 Q111,52 116,46 L126,37 Q132,31 140,31 H270 Q288,31 288,49 V209 Q288,227 270,227 H18 Q0,227 0,209 Z" fill="url(#fF)"/><rect x="49" y="127" width="216" height="27" fill="url(#zT)"/><rect x="264" y="127" width="24" height="27" fill="url(#zS)"/><rect x="-3" y="125" width="52" height="30" rx="11" fill="url(#zS)"/><rect x="24" y="134" width="14" height="9" fill="#6a6a70"/><rect x="17" y="152" width="31" height="62" rx="6" fill="url(#zP)"/><rect x="25" y="192" width="14" height="16" rx="2" fill="#f7dc70"/></svg><svg class="i" style="left:1423px;top:1285px;" width="288" height="227" viewBox="0 0 288 227"><path d="M0,18 Q0,0 18,0 H98 Q107,0 113,7 L132,31 H270 Q288,31 288,49 V170 H0 Z" fill="url(#fT)"/><path d="M0,70 Q0,52 18,52 H103 Q111,52 116,46 L126,37 Q132,31 140,31 H270 Q288,31 288,49 V209 Q288,227 270,227 H18 Q0,227 0,209 Z" fill="url(#fF)"/><rect x="49" y="127" width="216" height="27" fill="url(#zT)"/><rect x="264" y="127" width="24" height="27" fill="url(#zS)"/><rect x="-3" y="125" width="52" height="30" rx="11" fill="url(#zS)"/><rect x="24" y="134" width="14" height="9" fill="#6a6a70"/><rect x="17" y="152" width="31" height="62" rx="6" fill="url(#zP)"/><rect x="25" y="192" width="14" height="16" rx="2" fill="#f7dc70"/></svg><svg class="i" style="left:1819px;top:1285px;" width="288" height="227" viewBox="0 0 288 227"><path d="M0,18 Q0,0 18,0 H98 Q107,0 113,7 L132,31 H270 Q288,31 288,49 V170 H0 Z" fill="url(#fT)"/><path d="M0,70 Q0,52 18,52 H103 Q111,52 116,46 L126,37 Q132,31 140,31 H270 Q288,31 288,49 V209 Q288,227 270,227 H18 Q0,227 0,209 Z" fill="url(#fF)"/><rect x="49" y="127" width="216" height="27" fill="url(#zT)"/><rect x="264" y="127" width="24" height="27" fill="url(#zS)"/><rect x="-3" y="125" width="52" height="30" rx="11" fill="url(#zS)"/><rect x="24" y="134" width="14" height="9" fill="#6a6a70"/><rect x="17" y="152" width="31" height="62" rx="6" fill="url(#zP)"/><rect x="25" y="192" width="14" height="16" rx="2" fill="#f7dc70"/></svg><svg class="i" style="left:3007px;top:1285px;" width="288" height="227" viewBox="0 0 288 227"><path d="M0,18 Q0,0 18,0 H98 Q107,0 113,7 L132,31 H270 Q288,31 288,49 V170 H0 Z" fill="url(#fT)"/><path d="M0,70 Q0,52 18,52 H103 Q111,52 116,46 L126,37 Q132,31 140,31 H270 Q288,31 288,49 V209 Q288,227 270,227 H18 Q0,227 0,209 Z" fill="url(#fF)"/></svg><svg class="i" style="left:3403px;top:1285px;" width="288" height="227" viewBox="0 0 288 227"><path d="M0,18 Q0,0 18,0 H98 Q107,0 113,7 L132,31 H270 Q288,31 288,49 V170 H0 Z" fill="url(#fT)"/><clipPath id="phc"><rect x="11" y="42" width="265" height="96"/></clipPath><filter id="phb" x="-10%" y="-10%" width="120%" height="120%"><feGaussianBlur stdDeviation="5"/></filter><rect x="11" y="42" width="265" height="96" fill="#5b5a62"/><g clip-path="url(#phc)"><g filter="url(#phb)"><rect x="5" y="40" width="60" height="100" fill="#3c3c48"/><rect x="40" y="50" width="70" height="50" fill="#a9aeb0"/><rect x="20" y="70" width="40" height="70" fill="#2a2a36"/><rect x="80" y="95" width="50" height="45" fill="#6d6d78"/><rect x="115" y="42" width="40" height="95" fill="#7e7486"/><circle cx="138" cy="72" r="12" fill="#b040d8"/><rect x="155" y="42" width="30" height="95" fill="#a8a88e"/><rect x="180" y="50" width="62" height="90" fill="#2a2840"/><circle cx="196" cy="58" r="12" fill="#5a1ac0"/><rect x="236" y="42" width="45" height="96" fill="#c0ae70"/><circle cx="232" cy="62" r="11" fill="#e040c8"/><circle cx="212" cy="48" r="9" fill="#e83ab8"/><circle cx="250" cy="85" r="10" fill="#3a2a30"/><rect x="228" y="98" width="46" height="40" fill="#dcdce2"/></g></g><path d="M0,156 Q0,138 18,138 H100 Q108,138 113,133 L119,128 Q125,122 132,122 H270 Q288,122 288,140 V209 Q288,227 270,227 H18 Q0,227 0,209 Z" fill="url(#fF)"/></svg><svg class="i" style="left:631px;top:1737px;" width="288" height="227" viewBox="0 0 288 227"><path d="M0,18 Q0,0 18,0 H98 Q107,0 113,7 L132,31 H270 Q288,31 288,49 V170 H0 Z" fill="url(#fT)"/><rect x="12" y="41" width="263" height="110" rx="6" fill="url(#fB)"/><path d="M94,57 H165 L201,95 V150 H94 Z" fill="#f7f7fb" stroke="#9a9aa0" stroke-width="2"/><path d="M165,57 V95 H201" fill="#ececf2" stroke="#9a9aa0" stroke-width="2"/><path d="M0,154 Q0,137 17,137 H100 Q107,137 112,132 L118,127 Q123,122 130,122 H270 Q288,122 288,140 V209 Q288,227 270,227 H18 Q0,227 0,209 Z" fill="url(#fF)"/></svg><svg class="i" style="left:1027px;top:1737px;" width="288" height="227" viewBox="0 0 288 227"><path d="M0,18 Q0,0 18,0 H98 Q107,0 113,7 L132,31 H270 Q288,31 288,49 V170 H0 Z" fill="url(#fT)"/><path d="M8,40 Q8,34 14,34 H118 L124,38 V60 H8 Z" fill="#f4f4f4"/><path d="M0,69 Q0,51 18,51 H103 Q111,51 116,45 L126,37 Q132,31 140,31 H270 Q288,31 288,49 V209 Q288,227 270,227 H18 Q0,227 0,209 Z" fill="url(#fF)"/></svg><svg class="i" style="left:2610px;top:1240px;" width="300" height="330" viewBox="0 0 300 330"><defs>
<linearGradient id="vo" x1="0" y1="0" x2="1" y2="0"><stop offset="0" stop-color="#ff9a1e"/><stop offset="0.5" stop-color="#f07a00"/><stop offset="1" stop-color="#d86000"/></linearGradient>
<linearGradient id="vb" x1="0" y1="0" x2="0" y2="1"><stop offset="0" stop-color="#ffb03a"/><stop offset="1" stop-color="#f08a00"/></linearGradient>
<linearGradient id="vw" x1="0" y1="0" x2="1" y2="0"><stop offset="0" stop-color="#f4f4f4"/><stop offset="1" stop-color="#c8c8cc"/></linearGradient>
</defs>
<path d="M38,206 H248 L278,320 H5 Z" fill="url(#vb)"/>
<path d="M5,320 H278 L276,326 H8 Z" fill="#c25a00"/>
<path d="M125,9 Q144,4 164,9 L232,290 Q144,312 58,290 Z" fill="url(#vo)"/>
<path d="M113,50 Q144,45 176,50 L191,113 Q144,122 97,113 Z" fill="url(#vw)"/>
<path d="M85,164 Q144,175 204,164 L221,245 Q144,262 68,245 Z" fill="url(#vw)"/>
<g transform="translate(158,177)">
<clipPath id="shc"><path d="M0,19 L64,0 Q78,-1 88,5 Q100,15 112,17 L137,19 V73 Q124,112 71,138 L0,71 Z"/></clipPath>
<g clip-path="url(#shc)"><rect x="-2" y="-2" width="142" height="145" fill="#fdd20a"/>
<rect x="-2" y="-2" width="70" height="72" fill="#1f9be6"/><rect x="68" y="70" width="72" height="75" fill="#1b8fe8"/>
<path d="M68,-2 V145 M-2,70.5 H140" stroke="#3c8a4a" stroke-width="2.5"/></g>
</g></svg><div class="t" style="left:626.1px;top:1575.9px;font-size:41.3px;color:#f4f4f4;font-weight:normal;transform:scaleX(0.9966);transform-origin:0 0;">[Guru3D.com]-R</div><div class="t" style="left:718.3px;top:1625.5px;font-size:41.3px;color:#f4f4f4;font-weight:normal;transform:scaleX(0.8258);transform-origin:0 0;">TSS (1)</div><div class="t" style="left:1022.1px;top:1575.9px;font-size:41.3px;color:#f4f4f4;font-weight:normal;transform:scaleX(0.9966);transform-origin:0 0;">[Guru3D.com]-R</div><div class="t" style="left:1140.1px;top:1625.5px;font-size:41.3px;color:#f4f4f4;font-weight:normal;transform:scaleX(0.8144);transform-origin:0 0;">TSS</div><div class="t" style="left:1489.4px;top:1575.9px;font-size:41.3px;color:#f4f4f4;font-weight:normal;transform:scaleX(0.9218);transform-origin:0 0;">X870 Pro</div><div class="t" style="left:1447.3px;top:1625.5px;font-size:41.3px;color:#f4f4f4;font-weight:normal;transform:scaleX(0.9256);transform-origin:0 0;">RS(3.20)ROM</div><div class="t" style="left:1811.2px;top:1575.9px;font-size:41.3px;color:#f4f4f4;font-weight:normal;transform:scaleX(0.8538);transform-origin:0 0;">PolychromeRGB(1)</div><div class="t" style="left:2611.5px;top:1575.9px;font-size:41.3px;color:#f4f4f4;font-weight:normal;transform:scaleX(0.9705);transform-origin:0 0;">vlc-3.0.21-win32</div><div class="t" style="left:3042.4px;top:1575.9px;font-size:41.3px;color:#f4f4f4;font-weight:normal;transform:scaleX(0.9683);transform-origin:0 0;">Quick Share</div><div class="t" style="left:3444.8px;top:1575.9px;font-size:41.3px;color:#f4f4f4;font-weight:normal;transform:scaleX(0.9756);transform-origin:0 0;">Photos-001</div><div class="t" style="left:696.4px;top:2026.4px;font-size:41.3px;color:#f4f4f4;font-weight:normal;transform:scaleX(0.9342);transform-origin:0 0;">X870 Pro</div><div class="t" style="left:1014.8px;top:2026.4px;font-size:41.3px;color:#f4f4f4;font-weight:normal;transform:scaleX(0.9721);transform-origin:0 0;">PolychromeRGB(</div><div class="a" style="left:0px;top:2082px;width:3840px;height:82px;background:#1b1b1b;"></div><div class="t" style="left:50.8px;top:2103.3px;font-size:42px;color:#e6e6e6;font-weight:normal;transform:scaleX(0.9534);transform-origin:0 0;">31 elementos</div><div class="a" style="left:324px;top:2104px;width:3px;height:36px;background:#e6e6e6;"></div><svg class="i" style="left:3680px;top:2089px;" width="60" height="60" viewBox="0 0 60 60"><rect x="4" y="3" width="53" height="54" rx="8" fill="#e6e6e6"/><path d="M10,15 H50 M10,25.5 H50 M10,36 H50 M10,46 H50" stroke="#141414" stroke-width="3.2"/></svg><div class="a" style="left:3748px;top:2082px;width:74px;height:82px;background:#424242;border:3px solid #6a6a6a;border-bottom:none;border-radius:6px 6px 0 0"></div><svg class="i" style="left:3760px;top:2093px;" width="60" height="60" viewBox="0 0 60 60"><rect x="2" y="3" width="53" height="54" rx="8" fill="#f2f2f2"/><rect x="9" y="10" width="39" height="33" rx="4" fill="#ffffff" stroke="#111" stroke-width="3"/><path d="M9,48 H48" stroke="#111" stroke-width="3.2"/></svg></div><div class="a" style="left:1218px;top:482px;width:687px;height:811px;border-radius:32px;background:rgba(0,0,0,0.35);filter:blur(8px)"></div><div class="a" style="left:1226px;top:486px;width:671px;height:795px;border-radius:26px;overflow:hidden;background:radial-gradient(ellipse 190px 170px at 345px 375px,rgba(24,62,64,0.85),rgba(24,62,64,0) 100%),radial-gradient(ellipse 230px 200px at 330px 290px,rgba(40,62,40,0.6),rgba(40,62,40,0) 100%),radial-gradient(ellipse 300px 220px at 400px 110px,rgba(62,64,40,0.55),rgba(62,64,40,0) 100%),#2b2b2b;border:1.5px solid #3a3a3a"></div><div class="t" style="left:1369.0px;top:524.7px;font-size:48px;color:#fff;font-weight:normal;transform:scaleX(1.0458);transform-origin:0 0;">Nombre</div><div class="t" style="left:1369.2px;top:633.2px;font-size:48px;color:#fff;font-weight:normal;transform:scaleX(0.9888);transform-origin:0 0;">Fecha de modificación</div><div class="a" style="left:1289px;top:647px;width:16px;height:16px;background:#d9d9d9;border-radius:50%"></div><div class="t" style="left:1372.0px;top:741.2px;font-size:48px;color:#fff;font-weight:normal;transform:scaleX(1.0079);transform-origin:0 0;">Tipo</div><div class="t" style="left:1367.2px;top:849.2px;font-size:48px;color:#fff;font-weight:normal;transform:scaleX(0.9836);transform-origin:0 0;">Más</div><svg class="i" style="left:1812px;top:855px;" width="26" height="32" viewBox="0 0 26 32"><path d="M6,3 L19,16 L6,29" stroke="#d8d8d8" stroke-width="3.2" fill="none" stroke-linecap="round" stroke-linejoin="round"/></svg><div class="a" style="left:1226px;top:931px;width:671px;height:2px;background:#3b3d3d;"></div><div class="t" style="left:1373.0px;top:971.2px;font-size:48px;color:#fff;font-weight:normal;transform:scaleX(0.9651);transform-origin:0 0;">Ascendente</div><div class="t" style="left:1369.2px;top:1079.2px;font-size:48px;color:#fff;font-weight:normal;transform:scaleX(0.9809);transform-origin:0 0;">Descendente</div><div class="a" style="left:1289px;top:1093px;width:16px;height:16px;background:#d9d9d9;border-radius:50%"></div><div class="a" style="left:1226px;top:1161px;width:671px;height:2px;background:#3b3b3b;"></div><div class="a" style="left:1240px;top:1174px;width:645px;height:96px;background:#373737;border-radius:10px"></div><div class="t" style="left:1373.0px;top:1200.2px;font-size:48px;color:#fff;font-weight:normal;transform:scaleX(1.0065);transform-origin:0 0;">Agrupar por</div><svg class="i" style="left:1812px;top:1206px;" width="26" height="32" viewBox="0 0 26 32"><path d="M6,3 L19,16 L6,29" stroke="#d8d8d8" stroke-width="3.2" fill="none" stroke-linecap="round" stroke-linejoin="round"/></svg><div class="a" style="left:1879px;top:1167px;width:688px;height:1100px;border-radius:32px;background:rgba(0,0,0,0.35);filter:blur(8px)"></div><div class="a" style="left:1887px;top:1171px;width:672px;height:1100px;border-radius:26px;overflow:hidden;background:radial-gradient(ellipse 300px 520px at 0px 240px,rgba(92,72,18,0.85),rgba(92,72,18,0) 100%),linear-gradient(90deg,#2c2a26 0%,#2a2b2d 60%,#2b2c2e 100%);border:1.5px solid #3a3a3a"></div><div class="t" style="left:2030.0px;top:1210.2px;font-size:48px;color:#fff;font-weight:normal;transform:scaleX(1.0415);transform-origin:0 0;">Nombre</div><div class="t" style="left:2030.2px;top:1319.5px;font-size:48px;color:#fff;font-weight:normal;transform:scaleX(0.9879);transform-origin:0 0;">Fecha de modificación</div><div class="a" style="left:1950px;top:1333px;width:16px;height:16px;background:#d9d9d9;border-radius:50%"></div><div class="t" style="left:2033.0px;top:1428.7px;font-size:48px;color:#fff;font-weight:normal;transform:scaleX(1.0315);transform-origin:0 0;">Tipo</div><div class="t" style="left:2033.1px;top:1538.0px;font-size:48px;color:#fff;font-weight:normal;transform:scaleX(0.9639);transform-origin:0 0;">Tamaño</div><div class="t" style="left:2030.3px;top:1647.2px;font-size:48px;color:#fff;font-weight:normal;transform:scaleX(0.9656);transform-origin:0 0;">Fecha de creación</div><div class="t" style="left:2034.0px;top:1756.5px;font-size:48px;color:#fff;font-weight:normal;transform:scaleX(0.9879);transform-origin:0 0;">Autores</div><div class="t" style="left:2031.7px;top:1865.7px;font-size:48px;color:#fff;font-weight:normal;transform:scaleX(0.9569);transform-origin:0 0;">Categorías</div><div class="t" style="left:2030.2px;top:1975.0px;font-size:48px;color:#fff;font-weight:normal;transform:scaleX(0.9843);transform-origin:0 0;">Etiquetas</div><div class="t" style="left:2033.1px;top:2084.2px;font-size:48px;color:#fff;font-weight:normal;transform:scaleX(0.9885);transform-origin:0 0;">Título</div></body></html>
